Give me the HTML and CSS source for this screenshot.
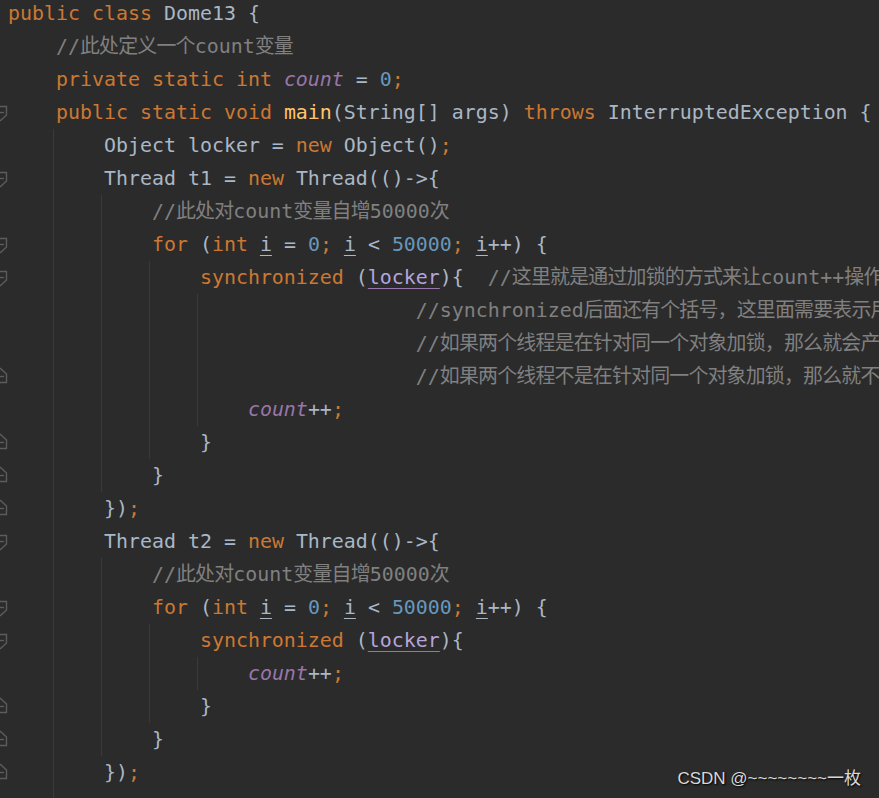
FILE: index.html
```html
<!DOCTYPE html>
<html lang="zh-CN">
<head>
<meta charset="utf-8">
<title>Dome13</title>
<link rel="stylesheet" href="styles.css">
</head>
<body>
<div class="editor">
  <div class="line"><span class="gut"></span><span class="code"><span class="k">public class </span>Dome13 {</span></div>
  <div class="line"><span class="gut"></span><span class="code">    <span class="c">//<span class="z">此处定义一个</span>count<span class="z">变量</span></span></span></div>
  <div class="line"><span class="gut"></span><span class="code">    <span class="k">private static int </span><span class="f">count</span> = <span class="n">0</span><span class="k">;</span></span></div>
  <div class="line"><span class="gut"><svg class="fold" width="8" height="33" viewBox="0 0 8 33"><path d="M-4 10.5H6.5V19L0 25"/><path d="M-2 16.5H4"/></svg></span><span class="code">    <span class="k">public static void </span><span class="m">main</span>(String[] args) <span class="k">throws </span>InterruptedException {</span></div>
  <div class="block g1">
    <div class="line"><span class="gut"></span><span class="code">        Object locker = <span class="k">new </span>Object()<span class="k">;</span></span></div>
    <div class="line"><span class="gut"><svg class="fold" width="8" height="33" viewBox="0 0 8 33"><path d="M-4 10.5H6.5V19L0 25"/><path d="M-2 16.5H4"/></svg></span><span class="code">        Thread t1 = <span class="k">new </span>Thread(()-&gt;{</span></div>
    <div class="block g2">
      <div class="line"><span class="gut"></span><span class="code">            <span class="c">//<span class="z">此处对</span>count<span class="z">变量自增</span>50000<span class="z">次</span></span></span></div>
      <div class="line"><span class="gut"><svg class="fold" width="8" height="33" viewBox="0 0 8 33"><path d="M-4 10.5H6.5V19L0 25"/><path d="M-2 16.5H4"/></svg></span><span class="code">            <span class="k">for </span>(<span class="k">int </span><span class="u">i</span> = <span class="n">0</span><span class="k">; </span><span class="u">i</span> &lt; <span class="n">50000</span><span class="k">; </span><span class="u">i</span>++) {</span></div>
      <div class="block g3">
        <div class="line"><span class="gut"><svg class="fold" width="8" height="33" viewBox="0 0 8 33"><path d="M-4 10.5H6.5V19L0 25"/><path d="M-2 16.5H4"/></svg></span><span class="code">                <span class="k">synchronized </span>(<span class="l">locker</span>){  <span class="c">//<span class="z">这里就是通过加锁的方式来让</span>count++<span class="z">操作变成原子的</span></span></span></div>
        <div class="block g4">
          <div class="line"><span class="gut"></span><span class="code">                                  <span class="c">//synchronized<span class="z">后面还有个括号，这里面需要表示用哪个对象来加锁</span></span></span></div>
          <div class="line"><span class="gut"></span><span class="code">                                  <span class="c">//<span class="z">如果两个线程是在针对同一个对象加锁，那么就会产生锁竞争</span></span></span></div>
          <div class="line"><span class="gut"><svg class="fold" width="8" height="33" viewBox="0 0 8 33"><path d="M-4 22.5H6.5V14L0 8"/><path d="M-2 16.5H4"/></svg></span><span class="code">                                  <span class="c">//<span class="z">如果两个线程不是在针对同一个对象加锁，那么就不会产生锁竞争</span></span></span></div>
          <div class="line"><span class="gut"></span><span class="code">                    <span class="f">count</span>++<span class="k">;</span></span></div>
        </div>
        <div class="line"><span class="gut"><svg class="fold" width="8" height="33" viewBox="0 0 8 33"><path d="M-4 22.5H6.5V14L0 8"/><path d="M-2 16.5H4"/></svg></span><span class="code">                }</span></div>
      </div>
      <div class="line"><span class="gut"><svg class="fold" width="8" height="33" viewBox="0 0 8 33"><path d="M-4 22.5H6.5V14L0 8"/><path d="M-2 16.5H4"/></svg></span><span class="code">            }</span></div>
    </div>
    <div class="line"><span class="gut"><svg class="fold" width="8" height="33" viewBox="0 0 8 33"><path d="M-4 22.5H6.5V14L0 8"/><path d="M-2 16.5H4"/></svg></span><span class="code">        })<span class="k">;</span></span></div>
    <div class="line"><span class="gut"><svg class="fold" width="8" height="33" viewBox="0 0 8 33"><path d="M-4 10.5H6.5V19L0 25"/><path d="M-2 16.5H4"/></svg></span><span class="code">        Thread t2 = <span class="k">new </span>Thread(()-&gt;{</span></div>
    <div class="block g2">
      <div class="line"><span class="gut"></span><span class="code">            <span class="c">//<span class="z">此处对</span>count<span class="z">变量自增</span>50000<span class="z">次</span></span></span></div>
      <div class="line"><span class="gut"><svg class="fold" width="8" height="33" viewBox="0 0 8 33"><path d="M-4 10.5H6.5V19L0 25"/><path d="M-2 16.5H4"/></svg></span><span class="code">            <span class="k">for </span>(<span class="k">int </span><span class="u">i</span> = <span class="n">0</span><span class="k">; </span><span class="u">i</span> &lt; <span class="n">50000</span><span class="k">; </span><span class="u">i</span>++) {</span></div>
      <div class="block g3">
        <div class="line"><span class="gut"><svg class="fold" width="8" height="33" viewBox="0 0 8 33"><path d="M-4 10.5H6.5V19L0 25"/><path d="M-2 16.5H4"/></svg></span><span class="code">                <span class="k">synchronized </span>(<span class="l">locker</span>){</span></div>
        <div class="block g4">
          <div class="line"><span class="gut"></span><span class="code">                    <span class="f">count</span>++<span class="k">;</span></span></div>
        </div>
        <div class="line"><span class="gut"><svg class="fold" width="8" height="33" viewBox="0 0 8 33"><path d="M-4 22.5H6.5V14L0 8"/><path d="M-2 16.5H4"/></svg></span><span class="code">                }</span></div>
      </div>
      <div class="line"><span class="gut"><svg class="fold" width="8" height="33" viewBox="0 0 8 33"><path d="M-4 22.5H6.5V14L0 8"/><path d="M-2 16.5H4"/></svg></span><span class="code">            }</span></div>
    </div>
    <div class="line"><span class="gut"><svg class="fold" width="8" height="33" viewBox="0 0 8 33"><path d="M-4 22.5H6.5V14L0 8"/><path d="M-2 16.5H4"/></svg></span><span class="code">        })<span class="k">;</span></span></div>
    <div class="line"><span class="gut"></span><span class="code"> </span></div>
  </div>
</div>
<div class="watermark">CSDN @~~~~~~~~一枚</div>
</body>
</html>
```
FILE: styles.css
```css
html, body {
  margin: 0;
  padding: 0;
  background: #2b2b2b;
  overflow: hidden;
  height: 798px;
}

.editor {
  margin-top: -3px;
  font-family: "DejaVu Sans Mono", "Noto Sans CJK SC", monospace;
  font-size: 19.93px;
  color: #a9b7c6;
}

.line {
  display: flex;
  height: 33px;
  line-height: 33px;
  white-space: pre;
}

.gut {
  flex: none;
  width: 8px;
  height: 33px;
}

.fold {
  display: block;
  fill: none;
  stroke: #5c5c5c;
  stroke-width: 1.4;
}

.code {
  white-space: pre;
}

.z {
  letter-spacing: -0.8px;
}

.block {
  position: relative;
}

.block::before {
  content: "";
  position: absolute;
  top: 0;
  bottom: 0;
  width: 1px;
  background: #3a3a3a;
}

.g1::before { left: 53px; }
.g2::before { left: 101px; }
.g3::before { left: 149px; }
.g4::before { left: 197px; }

.k { color: #cc7832; }
.n { color: #6897bb; }
.c { color: #808080; }
.m { color: #ffc66d; }
.f { color: #9876aa; font-style: italic; }
.u {
  text-decoration: underline;
  text-underline-offset: 4px;
  text-decoration-color: #a9b7c6;
}
.l {
  color: #b6a4dc;
  text-decoration: underline;
  text-underline-offset: 4px;
  text-decoration-color: #9876aa;
}

.watermark {
  position: absolute;
  right: 18px;
  bottom: 9px;
  font-family: "Liberation Sans", "Noto Sans CJK SC", sans-serif;
  font-size: 17px;
  color: #d8d8d8;
  text-shadow: 1px 1px 2px #000;
}
```
